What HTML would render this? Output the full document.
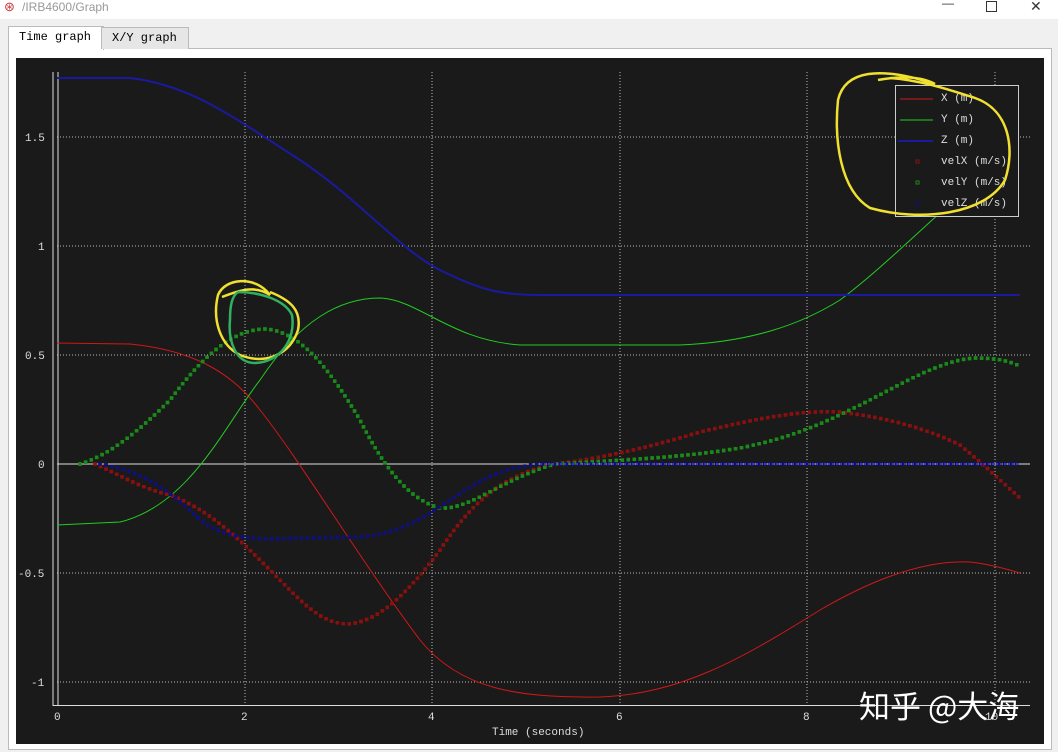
<!DOCTYPE html>
<html><head><meta charset="utf-8"><style>
body{margin:0;width:1058px;height:752px;background:#f0f0f0;overflow:hidden;font-family:"Liberation Mono",monospace;position:relative}
.title{position:absolute;left:0;top:0;width:1058px;height:19px;background:#fff;font-family:"Liberation Sans",sans-serif;font-size:12px;color:#999}
.tab{position:absolute;top:27px;height:21px;font-size:12px;line-height:21px;padding:0 10px;border:1px solid #bbb;border-bottom:none}
</style></head><body>
<div class="title"><span style="position:absolute;left:4px;top:-1px;color:#c33;font-size:13px">⊛</span><span style="position:absolute;left:22px;top:0">/IRB4600/Graph</span>
<span style="position:absolute;left:942px;top:-4px;color:#333">—</span><span style="position:absolute;left:986px;top:-3px;width:9px;height:9px;border:1px solid #333;top:1px"></span><span style="position:absolute;left:1030px;top:-2px;color:#333;font-size:14px">✕</span></div>
<div style="position:absolute;left:8px;top:48px;width:1042px;height:700px;background:#fff;border:1px solid #bbb"></div>
<div class="tab" style="left:8px;top:26px;height:23px;background:#fff;width:74px">Time graph</div>
<div class="tab" style="left:101px;background:#e6e6e6;width:66px">X/Y graph</div>
<svg style="position:absolute;left:0;top:0" width="1058" height="752" font-family="Liberation Mono,monospace" font-size="11">
<rect x="16" y="58" width="1028" height="686" fill="#1a1a1a"/>
<g stroke="#bbb" stroke-dasharray="1 2" stroke-width="1">
<line x1="245" y1="72" x2="245" y2="705"/><line x1="432" y1="72" x2="432" y2="705"/><line x1="620" y1="72" x2="620" y2="705"/><line x1="807" y1="72" x2="807" y2="705"/><line x1="995" y1="72" x2="995" y2="705"/>
<line x1="57" y1="137" x2="1030" y2="137"/><line x1="57" y1="246" x2="1030" y2="246"/><line x1="57" y1="355" x2="1030" y2="355"/><line x1="57" y1="573" x2="1030" y2="573"/><line x1="57" y1="682" x2="1030" y2="682"/>
</g>
<line x1="57" y1="464" x2="1030" y2="464" stroke="#ddd"/>
<g stroke="#ddd"><line x1="53" y1="72" x2="53" y2="706"/><line x1="58" y1="72" x2="58" y2="706"/><line x1="53" y1="705.5" x2="1030" y2="705.5"/></g>
<g fill="#ddd">
<text x="25" y="141">1.5</text><text x="38" y="250">1</text><text x="25" y="359">0.5</text><text x="38" y="468">0</text><text x="18" y="577">-0.5</text><text x="31" y="686">-1</text>
<text x="54" y="720">0</text><text x="241" y="720">2</text><text x="428" y="720">4</text><text x="616" y="720">6</text><text x="803" y="720">8</text><text x="985" y="720">10</text>
<text x="492" y="735">Time (seconds)</text></g>
<path d="M57,343 L130,344 C190,350 230,370 260,410 C300,460 360,560 420,640 C460,690 520,698 600,697 C680,694 740,660 820,610 C880,575 930,560 970,562 C990,564 1010,570 1020,573" fill="none" stroke="#d01818" stroke-width="1"/>
<path d="M57,525 L120,522 C190,505 225,425 260,380 C300,320 340,298 380,298 C420,300 450,340 520,345 L680,345 C750,342 800,325 840,300 C880,270 920,230 960,195" fill="none" stroke="#22cc22" stroke-width="1"/>
<path d="M57,78 L130,78 C190,85 230,115 300,160 C360,200 400,250 440,270 C480,290 500,295 540,295 L1020,295" fill="none" stroke="#1a1aa0" stroke-width="2"/>
<g fill="none" stroke-dasharray="0 6" stroke-linecap="square">
<path id="vx" d="M95,464 C120,475 140,488 170,495 C210,510 240,540 270,570 C300,600 320,624 348,624 C380,622 410,590 440,550 C470,505 500,475 555,464 C600,458 640,450 700,432 C760,418 800,410 840,412 C890,418 930,430 960,445 C990,470 1005,485 1020,498" stroke="#8a1010" stroke-width="3.5"/>
<path id="vy" d="M80,464 C110,455 140,430 170,400 C200,360 230,330 264,329 C300,330 330,370 360,420 C385,470 410,500 440,508 C470,510 500,480 555,464 C620,460 680,458 740,448 C790,438 820,425 860,405 C900,385 940,360 975,358 C1000,358 1010,362 1020,366" stroke="#1a8a1a" stroke-width="3.5"/>
<path id="vz" d="M100,464 C140,470 170,490 200,520 C220,535 240,538 270,539 L360,537 C400,533 420,520 450,500 C480,480 500,468 540,464 L1020,464" stroke="#10107a" stroke-width="3.5"/>
<use href="#vx" stroke="#1a1a1a" stroke-width="1.5"/><use href="#vy" stroke="#1a1a1a" stroke-width="1.5"/><use href="#vz" stroke="#1a1a1a" stroke-width="1.5"/>
</g>
<line x1="540" y1="464" x2="1020" y2="464" stroke="#6060ff" stroke-dasharray="2 2"/>
<rect x="895.5" y="85.5" width="123" height="131" fill="#1a1a1a" stroke="#ccc"/>
<line x1="900" y1="99" x2="933" y2="99" stroke="#d01818"/><line x1="900" y1="120" x2="933" y2="120" stroke="#22cc22"/><line x1="898" y1="141" x2="933" y2="141" stroke="#1a1aa0" stroke-width="2"/>
<rect x="916" y="160" width="3" height="3" fill="none" stroke="#8a1010"/><rect x="916" y="181" width="3" height="3" fill="none" stroke="#1a8a1a"/><rect x="916" y="202" width="3" height="3" fill="none" stroke="#10107a"/>
<g fill="#ddd"><text x="941" y="101">X (m)</text><text x="941" y="122">Y (m)</text><text x="941" y="143">Z (m)</text><text x="941" y="164">velX (m/s)</text><text x="941" y="185">velY (m/s)</text><text x="941" y="206">velZ (m/s)</text></g>
<path d="M878,80 C900,76 920,76 935,84 C880,66 845,70 838,100 C834,140 840,190 870,208 C920,222 985,215 1005,180 C1015,150 1010,110 975,98 C950,90 920,80 890,78" fill="none" stroke="#f0e030" stroke-width="2.5"/>
<path d="M222,297 C240,290 255,285 270,295 C255,275 225,278 218,295 C212,320 220,345 240,355 C265,365 290,355 298,330 C302,310 290,300 270,292" fill="none" stroke="#f0e030" stroke-width="2.5"/>
<path d="M238,292 C260,292 285,300 292,315 C296,340 280,362 255,363 C235,363 228,340 230,320 C230,305 232,296 238,292" fill="none" stroke="#30b060" stroke-width="2.5"/>
<text x="859" y="718" fill="#fff" font-family="Noto Sans CJK SC,sans-serif" font-size="31">知乎 @大海</text>
</svg>
</body></html>
